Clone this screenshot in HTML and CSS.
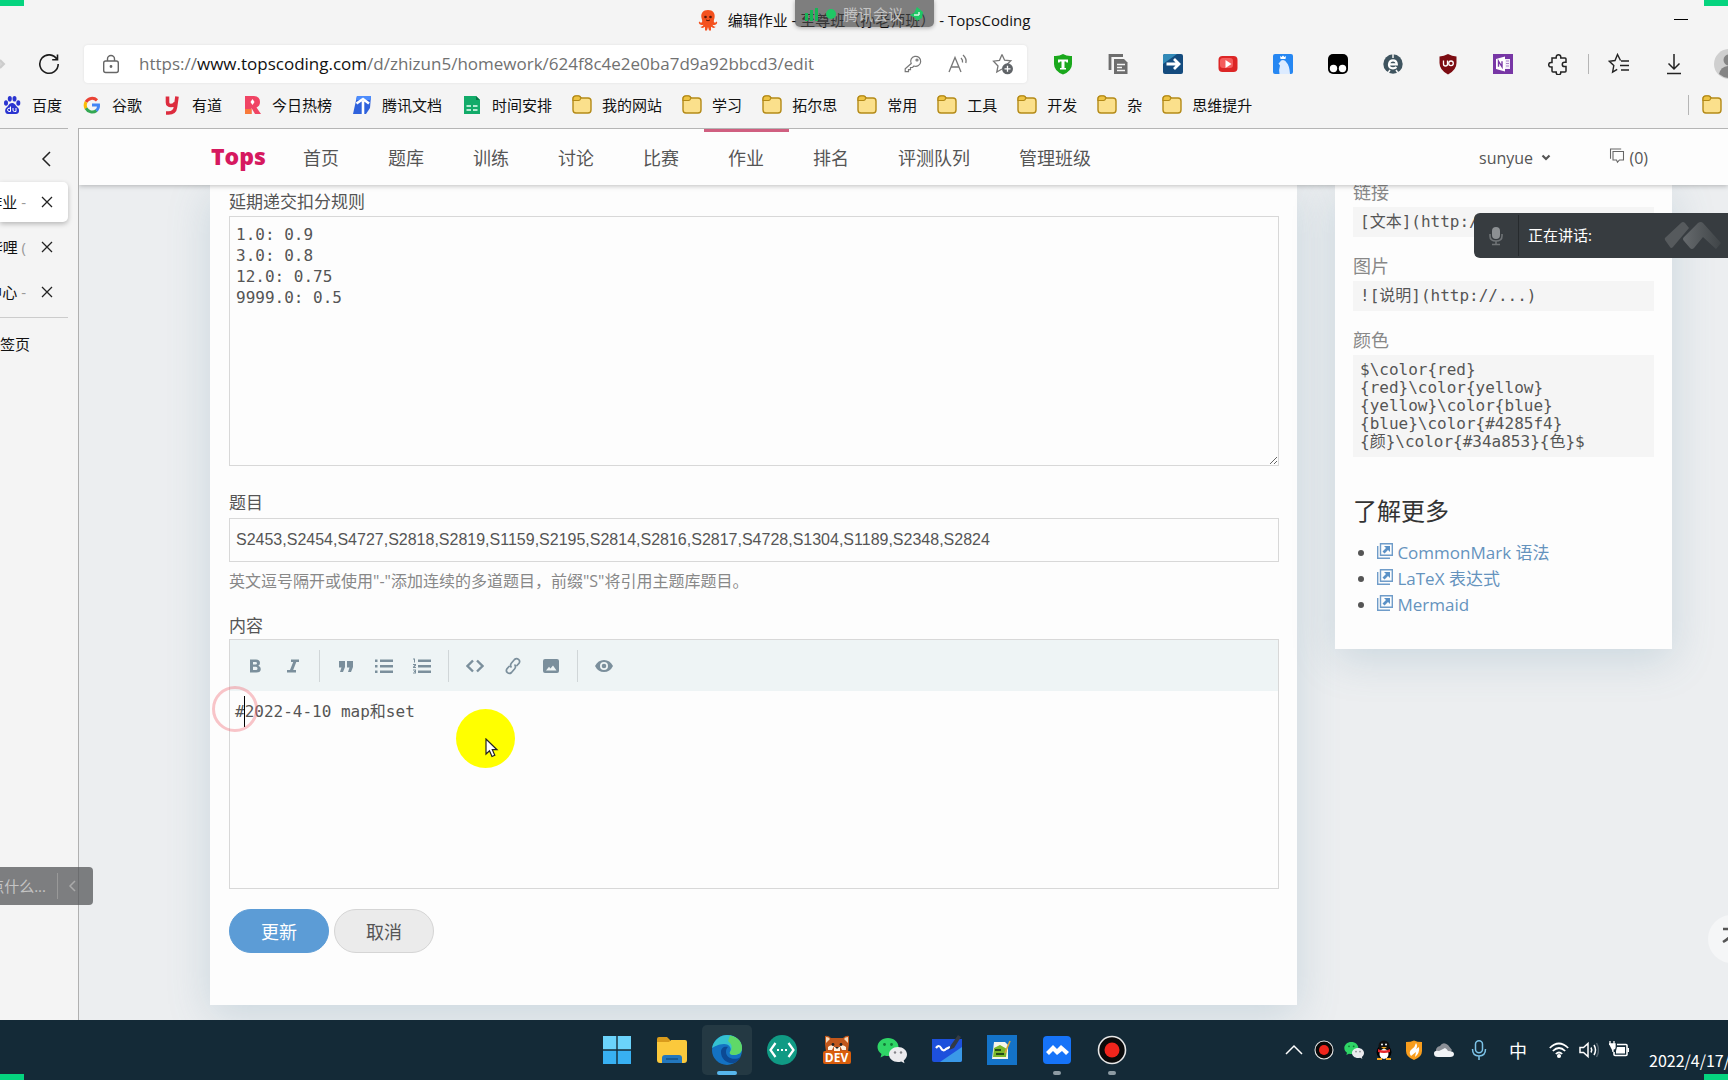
FILE: index.html
```html
<!doctype html>
<html lang="zh-CN">
  <head>
    <title>编辑作业 - TopsCoding</title>
    <meta charset="UTF-8" />
    <meta name="viewport" content="width=device-width, initial-scale=1" />
    <link rel="stylesheet" href="styles.css">
  </head>

  <body>
    <svg class="defs" width="0" height="0">
      <symbol id="folder" viewBox="0 0 20 20">
        <path d="M1 4q0-3 3-3h2.500q1.500 0 2.300 1.500l.7.500H16q3 0 3 3v9q0 3-3 3H4q-3 0-3-3z" fill="#fbe08c" stroke="#b48a17" stroke-width="1.400" />
        <path d="M1 4q0-3 3-3h2.500q1.500 0 2.300 2Q8.300 5.500 6.500 5.500H1z" fill="#eec443" stroke="#b48a17" stroke-width="1.200" />
      </symbol>
      <symbol id="close" viewBox="0 0 12 12">
        <path d="M1 1l10 10M11 1L1 11" stroke="#222" stroke-width="1.300" />
      </symbol>
      <symbol id="wechat" viewBox="0 0 30 30">
        <path d="M11 3C5 3 .5 7 .5 12c0 3 1.500 5.300 4 7l-1 3.500L7.500 20.500q2 .6 4 .5C17 21 21.500 17 21.500 12S17 3 11 3z" fill="#2fd566" />
        <path d="M21 12c-5 0-9 3.400-9 7.500s4 7.500 9 7.500q1.700 0 3.200-.5l3.300 1.800-.8-2.900c2-1.400 3.300-3.500 3.300-5.900 0-4.100-4-7.500-9-7.500z" fill="#ebebee" />
        <g fill="#137a37"><circle cx="7.500" cy="9.500" r="1.400" /><circle cx="14.500" cy="9.500" r="1.400" /></g>
        <g fill="#85858a"><circle cx="18" cy="17.500" r="1.200" /><circle cx="24" cy="17.500" r="1.200" /></g>
      </symbol>
      <symbol id="external" viewBox="0 0 16 16">
        <path d="M3.500.7h11.800v11.600H3.500zM.7 3v12.300H13" fill="none" stroke="#6f9cc9" stroke-width="1.400" />
        <path d="M7 3h6v6l-2-2-3.500 3.500L5.500 8.500 9 5z" fill="#5b91c6" />
      </symbol>
      <symbol id="record" viewBox="0 0 30 30">
        <circle cx="15" cy="15" r="13.500" fill="#0a0a0a" stroke="#e6e6e6" stroke-width="1.600" />
        <circle cx="15" cy="15" r="7.500" fill="#f0251c" />
      </symbol>
    </svg>

    <header class="browser">
      <div class="titlebar">
        <svg class="favicon" width="20" height="22" viewBox="0 0 20 22">
          <path d="M10 1C5 1 2.500 4.500 3.500 9c.5 2 1 3 .5 4-.7 1.200-2 .5-2.500-.5-.8 0-1 1.500 0 2.500s3 1.200 4 .8c-.5 1.500-2 2-3 2 .3 1.500 3 1.500 4.500 0L7 21.500h2L10 18l1 3.500h2L13 17.800c1.500 1.500 4.200 1.500 4.500 0-1 0-2.500-.5-3-2 1 .4 3 .2 4-.8s.8-2.500 0-2.500c-.5 1-1.800 1.700-2.500.5-.5-1 0-2 .5-4C17.500 4.500 15 1 10 1z" fill="#f4511e" />
          <circle cx="7.500" cy="8" r="1.300" fill="#55180a" /><circle cx="12.500" cy="8" r="1.300" fill="#55180a" />
          <path d="M8 11q2 1.500 4 0" fill="none" stroke="#55180a" />
        </svg>
        <span class="page-title">编辑作业 - 至尊班（孙老师班） - TopsCoding</span>
        <button class="minimize" aria-label="最小化"></button>
        <div class="meeting-bar">
          <svg width="14" height="14" viewBox="0 0 14 14" fill="#18b455"><path d="M0 6h3v8H0zM5 3h3v11H5zM10 1h3v13h-3z" /></svg>
          <span class="dot"></span>
          <span>腾讯会议</span>
          <svg width="14" height="14" viewBox="0 0 14 14"><path d="M7 0l6 5-1 6-5 3-2-3-5-3 4-2z" fill="#1fc765" /><path d="M4 8h5M9 5v3" stroke="#d9f5e3" stroke-width="1.500" /></svg>
        </div>
      </div>

      <div class="toolbar">
        <button class="back" aria-label="前进">
          <svg width="6" height="14" viewBox="0 0 6 14"><path d="M0 3l4 4-4 4" fill="#d5d5d5" stroke="#ccc" stroke-width="2" /></svg>
        </button>
        <button class="reload" aria-label="刷新">
          <svg width="22" height="22" viewBox="0 0 22 22" fill="none" stroke="#1b1b1b" stroke-width="1.600"><path d="M19 6.500A9.200 9.200 0 1 0 20.200 11M19.500 1.500v5.300h-5.300" /></svg>
        </button>
        <div class="address">
          <svg width="20" height="20" viewBox="0 0 20 20" fill="none" stroke="#666" stroke-width="1.400"><rect x="2.700" y="7" width="14.600" height="11.500" rx="2" /><path d="M6.500 7V5a3.500 3.500 0 0 1 7 0v2" /><circle cx="10" cy="12.500" r=".7" fill="#666" /></svg>
          <div class="url">https://<b>www.topscoding.com</b>/d/zhizun5/homework/624f8c4e2e0ba7d9a92bbcd3/edit</div>
          <button aria-label="密码"><svg width="18" height="18" viewBox="0 0 18 18" fill="none" stroke="#777" stroke-width="1.200"><path d="M7.200 8.500A5 5 0 1 1 10 11l-1.500 1.500H6.500v2.200H4.500v2H1.200v-3z" /><circle cx="13" cy="5" r="1" /></svg></button>
          <button aria-label="朗读"><svg width="20" height="20" viewBox="0 0 20 20" fill="none" stroke="#777" stroke-width="1.300"><path d="M1 18L7 3.500 13 18M3.200 13h7.600M13 4q2 2 1.500 4.500M15 1q4 3.500 2.800 8" /></svg></button>
          <button aria-label="收藏"><svg width="22" height="22" viewBox="0 0 22 22" fill="none" stroke="#777" stroke-width="1.300"><path d="M10 1.500l2.600 5.700 6.200.6-3.500 3.300M10 16l-5.200 3 1.200-6-4.500-4.800 6-.9L10 1.500" /><circle cx="15.500" cy="15.800" r="5.500" fill="#606468" stroke="none" /><path d="M15.500 12.800v6M12.500 15.800h6" stroke="#fff" /></svg></button>
        </div>
        <div class="extensions">
          <button aria-label="T"><svg width="20" height="22" viewBox="0 0 20 22"><path d="M10 1q4 2.500 9 2v8q0 7-9 10.500Q1 18 1 11V3q5 .5 9-2z" fill="#1aa81c" /><path d="M5 6.500h10v3h-1.500L13 8.500h-1.500V15H13v1.500H7V15h1.500V8.500H7L6.500 9.500H5z" fill="#fff" /></svg></button>
          <button aria-label="复制"><svg width="20" height="22" viewBox="0 0 20 22"><path d="M2 17V2.500h13" fill="none" stroke="#6d6d6d" stroke-width="2.800" /><path d="M6 6h10l3.500 3.500V21H6z" fill="#6d6d6d" /><path d="M9 11.500h8M9 14.500h5M9 17.500h8" stroke="#f4f4f4" stroke-width="1.500" /></svg></button>
          <button aria-label="跳转"><svg width="20" height="20" viewBox="0 0 20 20"><rect width="20" height="20" rx="2" fill="#144b7e" /><path d="M0 10V2q0-2 2-2h12z" fill="#328ab8" /><path d="M3.500 10h12M11 5l5 5-5 5" fill="none" stroke="#fff" stroke-width="2.800" /></svg></button>
          <button aria-label="视频"><svg width="20" height="18" viewBox="0 0 20 18"><rect x=".5" y="1" width="19" height="16" rx="4" fill="#dc2626" /><rect x="2" y="3" width="13" height="10" rx="3" fill="#f45c5c" /><path d="M7.500 5l6 4-6 4z" fill="#fff" /></svg></button>
          <button aria-label="企鹅"><svg width="20" height="20" viewBox="0 0 20 20"><rect width="20" height="20" rx="2" fill="#2687f2" /><path d="M7 2l1.500 1L10 1.500l1.500 1.500L13 2l-.5 3h-5z" fill="#fff" /><path d="M5.500 9.500L7 8q.5-2 3-2t3.500 2.500q3 3 3.500 11.500H6.500q-1-4 .5-8.500z" fill="#dcebff" /></svg></button>
          <button aria-label="脚本"><svg width="20" height="20" viewBox="0 0 20 20"><rect width="20" height="20" rx="5" fill="#000" /><circle cx="5.500" cy="14.500" r="3.700" fill="#fff" /><circle cx="14.500" cy="14.500" r="3.700" fill="#fff" /></svg></button>
          <button aria-label="E"><svg width="20" height="20" viewBox="0 0 20 20"><circle cx="10" cy="10" r="9.700" fill="#3f545f" /><path d="M10 0v4M5 19l2-3M15 19l-2-3" stroke="#f4f4f4" stroke-width="1.500" /><path d="M6 10.300h7.800Q13.500 6.300 10 6.300T6 10.300t4 4q2 0 3.500-1.300" fill="none" stroke="#fff" stroke-width="2.200" /></svg></button>
          <button aria-label="uBlock"><svg width="20" height="22" viewBox="0 0 20 22"><path d="M10 1q4 2.300 8.500 2.500V10q0 7-8.500 11.500Q1.500 17 1.500 10V3.500Q6 3.300 10 1z" fill="#7c0c12" /><path d="M5.500 7.500v3.500q0 2 2 2t2-2V7.500v5" fill="none" stroke="#fff" stroke-width="1.300" /><circle cx="13" cy="10.300" r="2.300" fill="none" stroke="#fff" stroke-width="1.300" /></svg></button>
          <button aria-label="OneNote"><svg width="20" height="20" viewBox="0 0 20 20"><rect width="20" height="20" fill="#7736a5" /><path d="M3 5l9-2.500v15L3 15z" fill="#fff" /><path d="M12 5h5v10h-5" fill="#f4effa" /><path d="M5.500 12.800V7.200l3.500 5.600V7.200" fill="none" stroke="#7736a5" stroke-width="1.400" /><path d="M13 7h3M13 9.500h3M13 12h3" stroke="#a983c8" /></svg></button>
          <button aria-label="扩展"><svg width="20" height="22" viewBox="0 0 20 22"><path d="M4 5h4.200V4a2.300 2.300 0 0 1 4.600 0v1H17q1 0 1 1v3.200h-1.500a2.200 2.200 0 0 0 0 4.400H18V18q0 1-1 1h-4.200v.5a2.300 2.300 0 0 1-4.600 0V19H5q-1 0-1-1v-4H3a2.300 2.300 0 0 1 0-4.600h1z" fill="none" stroke="#222" stroke-width="1.500" /></svg></button>
          <span class="divider"></span>
          <button aria-label="收藏夹"><svg width="22" height="22" viewBox="0 0 22 22" fill="none" stroke="#222" stroke-width="1.400"><path d="M12.500 7.500L9.500 1.500 7 7.500l-5.700.8 4.500 4.300-1.200 6.600 4.600-2.800M13 8h8M12 12.500h9M13 17h8" /></svg></button>
          <button aria-label="下载"><svg width="18" height="22" viewBox="0 0 18 22" fill="none" stroke="#222" stroke-width="1.500"><path d="M9 1v15M3.500 10.500L9 16l5.500-5.500M2 20.500h14" /></svg></button>
          <button class="avatar" aria-label="用户"><svg width="30" height="30" viewBox="0 0 30 30"><circle cx="15" cy="15" r="15" fill="#cfcfcf" /><circle cx="15" cy="11" r="5.500" fill="#858585" /><path d="M5 25q2-8 10-8t10 8q-10 8-20 0z" fill="#858585" /></svg></button>
        </div>
      </div>

      <nav class="bookmarks">
        <a href="#"><svg viewBox="0 0 20 20" fill="#2a34d0"><ellipse cx="4" cy="8" rx="2" ry="2.800" /><ellipse cx="7.800" cy="3.800" rx="2" ry="2.800" /><ellipse cx="12.500" cy="3.800" rx="2" ry="2.800" /><ellipse cx="16.300" cy="8" rx="2" ry="2.800" /><path d="M10 8c-3 0-3.500 3-5.500 4.500s-2 6.500 1.500 6.500h8c3.500 0 4-4.500 1.700-6.500S13 8 10 8z" /><path d="M8.500 11.500v5H7q-1.500-.3-1.500-1.700T7 13.200h1.500M11 13v2q0 1.500 1.300 1.500H14V13" fill="none" stroke="#fff" /></svg>百度</a>
        <a href="#"><svg viewBox="0 0 20 20" fill="none" stroke-width="3"><path d="M15 5.300A7 7 0 0 0 4 7" stroke="#ea4335" /><path d="M4 7a7 7 0 0 0 0 6.500" stroke="#fbbc05" /><path d="M4 13.300a7 7 0 0 0 10.500 2.200" stroke="#34a853" /><path d="M14.300 15.700Q16.800 13.500 16.500 10H10" stroke="#4285f4" /></svg>谷歌</a>
        <a href="#"><svg viewBox="0 0 20 20" fill="none" stroke="#dd2c3e" stroke-width="3.600"><path d="M5.500 1.500v6q0 3 3.500 3t4.500-3M15 1.500L13.500 12q-.7 6-7 6H4" /></svg>有道</a>
        <a href="#"><svg viewBox="0 0 20 20"><path d="M3 1h9q6 .5 6 6 0 4-3.500 5.500L19 19h-6l-3.500-6v6H3z" fill="#f04464" /><path d="M3 14h6.500v5H3z" fill="#f87a3a" /><path d="M10.500 4l2 3-2 3-2-3z" fill="#fff" /></svg>今日热榜</a>
        <a href="#"><svg viewBox="0 0 20 20"><path d="M5 1h14l-1 12-4 6H1z" fill="#2f62dc" /><path d="M5 1h14l-.3 4H4z" fill="#4e8dfc" /><path d="M4.500 8.500L11 4l6 4.500M11 6v13" fill="none" stroke="#fff" stroke-width="2.600" /></svg>腾讯文档</a>
        <a href="#"><svg viewBox="0 0 20 20"><path d="M2 1h12l4 4v14H2z" fill="#12ab69" /><path d="M14 1l4 4h-4z" fill="#087748" /><path d="M4.500 11h4.500M11 11h4.500M4.500 15h4.500M11 15h4.500" stroke="#eafff4" stroke-width="1.600" /></svg>时间安排</a>
        <a href="#"><svg><use href="#folder" /></svg>我的网站</a>
        <a href="#"><svg><use href="#folder" /></svg>学习</a>
        <a href="#"><svg><use href="#folder" /></svg>拓尔思</a>
        <a href="#"><svg><use href="#folder" /></svg>常用</a>
        <a href="#"><svg><use href="#folder" /></svg>工具</a>
        <a href="#"><svg><use href="#folder" /></svg>开发</a>
        <a href="#"><svg><use href="#folder" /></svg>杂</a>
        <a href="#"><svg><use href="#folder" /></svg>思维提升</a>
        <a href="#" class="other" aria-label="其他收藏夹"><svg><use href="#folder" /></svg></a>
      </nav>
    </header>

    <div class="workspace">
      <aside class="tabs">
        <button class="collapse" aria-label="折叠">
          <svg width="10" height="16" viewBox="0 0 10 16"><path d="M9 1L2 8l7 7" fill="none" stroke="#222" stroke-width="1.500" /></svg>
        </button>
        <div class="tab active"><span>作业 <i>-</i></span><button aria-label="关闭"><svg width="12" height="12"><use href="#close" /></svg></button></div>
        <div class="tab"><span>哔哩 <i>(</i></span><button aria-label="关闭"><svg width="12" height="12"><use href="#close" /></svg></button></div>
        <div class="tab"><span>中心 <i>-</i></span><button aria-label="关闭"><svg width="12" height="12"><use href="#close" /></svg></button></div>
        <button class="new-tab">签页</button>
      </aside>

      <main class="page">
        <nav class="site-nav">
          <a class="logo" href="#">Tops</a>
          <a href="#">首页</a>
          <a href="#">题库</a>
          <a href="#">训练</a>
          <a href="#">讨论</a>
          <a href="#">比赛</a>
          <a href="#" class="current">作业</a>
          <a href="#">排名</a>
          <a href="#">评测队列</a>
          <a href="#">管理班级</a>
          <div class="account">
            <a href="#">sunyue <svg width="10" height="10" viewBox="0 0 10 10"><path d="M1.500 1.500L5 5l3.500-3.500" fill="none" stroke="#555" stroke-width="2.200" /></svg></a>
            <a href="#"><svg width="16" height="16" viewBox="0 0 16 18"><path d="M.7 12V1.200h12M3.500 4h11.800v9.500h-4.500L8.500 16l-1-2.500h-4z" fill="none" stroke="#666" stroke-width="1.200" /></svg> (0)</a>
          </div>
        </nav>

        <div class="columns">
          <form class="card" id="homework">
            <label for="rules">延期递交扣分规则</label>
            <textarea id="rules" name="rules" spellcheck="false">1.0: 0.9
3.0: 0.8
12.0: 0.75
9999.0: 0.5</textarea>

            <label for="problems">题目</label>
            <input type="text" id="problems" name="problems" value="S2453,S2454,S4727,S2818,S2819,S1159,S2195,S2814,S2816,S2817,S4728,S1304,S1189,S2348,S2824" />
            <p class="help">英文逗号隔开或使用"-"添加连续的多道题目，前缀"S"将引用主题库题目。</p>

            <label for="content">内容</label>
            <div class="editor">
              <div class="editor-tools">
                <button type="button" aria-label="粗体"><svg viewBox="0 0 18 18"><path d="M4 2.500h6q4 .2 4 3.500 0 2-1.700 2.800Q14.800 9.500 14.800 12q0 3.500-4.500 3.500H4zm3 2.500v2.500h2.500q1.500-.1 1.500-1.300T9.500 5zm0 4.800V13h3q1.500-.1 1.500-1.600t-1.500-1.600z" fill-rule="evenodd" /></svg></button>
                <button type="button" aria-label="斜体"><svg viewBox="0 0 18 18"><path d="M7 2.500h8V5h-2.700L9.200 13H12v2.500H3V13h3l3.200-8H7z" /></svg></button>
                <span></span>
                <button type="button" aria-label="引用"><svg viewBox="0 0 18 18"><path d="M2 4h6v6l-2 5H3l1.500-4.500H2zM10 4h6v6l-2 5h-3l1.500-4.500H10z" /></svg></button>
                <button type="button" aria-label="列表"><svg viewBox="0 0 18 18"><path d="M0 2.500h2.500V5H0zM0 8h2.500v2.500H0zM0 13.500h2.500V16H0zM5 2.500h13V5H5zM5 8h13v2.500H5zM5 13.500h13V16H5z" /></svg></button>
                <button type="button" aria-label="编号"><svg viewBox="0 0 18 18"><path d="M5 2.500h13V5H5zM5 8h13v2.500H5zM5 13.500h13V16H5zM0 1.500h2v4H1V2.500H0zM0 7h3v1.500L1.500 10H3v1H0v-1l1.500-2H0zM0 12.500h3v4H0v-1h2V15H1v-1h1v-.5H0z" /></svg></button>
                <span></span>
                <button type="button" aria-label="代码"><svg viewBox="0 0 18 18"><path d="M7 3.500L1.500 9 7 14.500M11 3.500L16.500 9 11 14.500" fill="none" stroke="#7b8f9c" stroke-width="2.400" /></svg></button>
                <button type="button" aria-label="链接"><svg viewBox="0 0 18 18"><path d="M7.500 10.500q-2-2 0-4.500l3-3.500q2-1.800 4-.2t.5 4L12.500 9M10.500 7.500q2 2 0 4.500l-3 3.500q-2 1.800-4 .2t-.5-4L5.500 9" fill="none" stroke="#7b8f9c" stroke-width="1.700" /></svg></button>
                <button type="button" aria-label="图片"><svg viewBox="0 0 18 18"><path d="M3 2h12q2 0 2 2v10q0 2-2 2H3q-2 0-2-2V4q0-2 2-2zm1 11.500h10.500L11 8.500l-2.500 3L7 9.800z" fill-rule="evenodd" /></svg></button>
                <span></span>
                <button type="button" aria-label="预览"><svg viewBox="0 0 18 18"><path d="M9 3Q3 3 0 9q3 6 9 6t9-6q-3-6-9-6zm0 2a4 4 0 1 1 0 8 4 4 0 0 1 0-8zm0 1.700a2.300 2.300 0 1 0 0 4.600 2.300 2.300 0 0 0 0-4.600z" fill-rule="evenodd" /></svg></button>
              </div>
              <textarea id="content" name="content" spellcheck="false">#2022-4-10 map和set</textarea>
              <div class="caret"></div>
              <div class="click-ring"></div>
              <div class="pointer">
                <svg width="14" height="20" viewBox="0 0 14 20"><path d="M1 1v15l3.500-3.300 2.500 5.800 2.800-1.200L7.300 11.700H12z" fill="#fff" stroke="#222" stroke-width="1.200" /></svg>
              </div>
            </div>

            <div class="actions">
              <button type="submit" class="primary">更新</button>
              <button type="button">取消</button>
            </div>
          </form>

          <aside class="card hints">
            <h4>链接</h4>
            <pre>[文本](http://...)</pre>
            <h4>图片</h4>
            <pre>![说明](http://...)</pre>
            <h4>颜色</h4>
            <pre>$\color{red}
{red}\color{yellow}
{yellow}\color{blue}
{blue}\color{#4285f4}
{颜}\color{#34a853}{色}$</pre>
            <h2>了解更多</h2>
            <ul>
              <li><a href="#"><svg width="16" height="16"><use href="#external" /></svg> CommonMark 语法</a></li>
              <li><a href="#"><svg width="16" height="16"><use href="#external" /></svg> LaTeX 表达式</a></li>
              <li><a href="#"><svg width="16" height="16"><use href="#external" /></svg> Mermaid</a></li>
            </ul>
          </aside>
        </div>
      </main>

      <div class="speaking">
        <svg width="16" height="20" viewBox="0 0 16 20"><rect x="4" y="1" width="8" height="12" rx="4" fill="#8c9093" /><path d="M2 8v2q0 5 6 5t6-5V8M8 15v3.500M4 18.500h8" fill="none" stroke="#6f7376" stroke-width="1.600" /></svg>
        <span>正在讲话:</span>
        <svg class="brand" width="58" height="32" viewBox="0 0 58 32">
          <defs>
            <linearGradient id="fade" x1="0" y1="0" x2="1" y2="0"><stop offset="0" stop-color="#666a6d" /><stop offset="1" stop-color="#3f4447" /></linearGradient>
          </defs>
          <path d="M2 17L17 3q2-2 4 0l4 5L9 27q-2 2-3 0l-5-7q-1-2 1-3z" fill="#565a5d" />
          <path d="M20 17L34 3q3-2 5 0l18 20-5 6-13-12-9 11q-2 2-4 0l-6-7q-2-2 0-4z" fill="url(#fade)" />
        </svg>
      </div>
      <div class="say">
        <span>点什么...</span>
        <svg width="8" height="12" viewBox="0 0 8 12"><path d="M7 1L2 6l5 5" fill="none" stroke="#aaa" stroke-width="1.500" /></svg>
      </div>
      <button class="translate" aria-label="翻译">
        <svg width="48" height="48" viewBox="0 0 48 48"><path d="M15 14h13M26 14q-1 7-11 13M21 24q2 3 5 4" fill="none" stroke="#555" stroke-width="2.600" /></svg>
      </button>
    </div>

    <footer class="taskbar">
      <div class="apps">
        <button aria-label="开始"><svg viewBox="0 0 30 30" fill="#4cc2f8"><path d="M1 1h13.300v13.300H1zM15.700 1H29v13.300H15.700z" fill="#6bd3fb" /><path d="M1 15.700h13.300V29H1zM15.700 15.700H29V29H15.700z" fill="#38b0f2" /></svg></button>
        <button aria-label="资源管理器"><svg viewBox="0 0 30 30"><path d="M0 4q0-2 2-2h8l3 3v4H0z" fill="#d99b1c" /><path d="M0 7h12l2-2h14q2 0 2 2v18q0 3-3 3H3q-3 0-3-3z" fill="#fbc93c" /><path d="M5 28v-5q0-3 3-3h14q3 0 3 3v5z" fill="#2377bd" /><path d="M9 24h12" stroke="#155a95" stroke-width="2" /></svg></button>
        <button class="open" aria-label="Edge"><svg viewBox="0 0 30 30"><circle cx="15" cy="15" r="15" fill="#1472c2" /><path d="M0 13C2 4 9 0 15 0c9 0 15 6 15 13 0 5-4 7-8 7-3 0-5-1-4-3 2-3 0-8-6-8-6 0-10 3-12 4z" fill="#35c1d0" /><path d="M18 .5C26 2 30 7 30 13c0 5-4 7-8 7-3 0-5-1-4-3 3-4 2-8-2-11z" fill="#5fd868" /><path d="M9 17c0 7 6 12 13 11 3-1 5-3 7-6-7 4-15 1-15-5 0-3 1-4 2-5-4-1-7 1-7 5z" fill="#0c4a94" /></svg></button>
        <button aria-label="代码"><svg viewBox="0 0 30 30"><circle cx="15" cy="15" r="15" fill="#109a84" /><path d="M8.500 8L3.500 15l5 7M21.500 8l5 7-5 7" fill="none" stroke="#fff" stroke-width="2.200" /><path d="M10 15h2M14 15h2M18 15h2" stroke="#fff" stroke-width="2" /></svg></button>
        <button class="dev" aria-label="Dev-C++"><svg viewBox="0 0 30 30"><path d="M3 1q3-1 6 2h12q3-3 6-2v8l-1 8H4L3 9z" fill="#c1571b" /><path d="M4 2q3 0 4 2L4 8zM26 2q-3 0-4 2l4 4z" fill="#f9d9b7" /><path d="M6 12q3-3 6-1l-2 4H6zM24 12q-3-3-6-1l2 4h4zM12 12h6v4h-6z" fill="#fff0df" /><path d="M13 12h4l-2 2z" fill="#222" /><circle cx="11" cy="9.500" r="1.400" fill="#222" /><circle cx="19" cy="9.500" r="1.400" fill="#222" /><rect x="1" y="16" width="28" height="13" rx="2" fill="#d85d0c" /></svg><b>DEV</b></button>
        <button aria-label="微信"><svg><use href="#wechat" /></svg></button>
        <button aria-label="白板"><svg viewBox="0 0 30 30"><path d="M0 4h30v21q0 2-2 2H2q-2 0-2-2z" fill="#1d50dc" /><path d="M30 12v13q0 2-2 2H8z" fill="#3a99e8" /><path d="M4 13q3-4 5 0t5 1l4-2" fill="none" stroke="#fff" stroke-width="2.200" /><path d="M17 15l2-5 7-10 3 2-7 11z" fill="#333a44" /></svg></button>
        <button aria-label="记事本"><svg viewBox="0 0 30 30"><rect width="30" height="30" fill="#1473c8" /><path d="M7 7h11l3 3v14H5z" fill="#f5f5ea" /><path d="M7 13l6-3 7 4-1 8H6z" fill="#7ab82b" /><path d="M8 15h6M9 19h8" stroke="#234a1a" stroke-width="2" /><path d="M18 18l5-12" stroke="#d8a43a" stroke-width="1.600" /></svg></button>
        <button class="running" aria-label="腾讯会议"><svg viewBox="0 0 30 30"><rect x="1" y="1" width="28" height="28" rx="4" fill="#1673f8" /><path d="M4 17l7-7 4 4 4-4 8 7-3 3-4-4-5 4-4-4-4 4z" fill="#fff" /></svg></button>
        <button class="running" aria-label="录屏"><svg><use href="#record" /></svg></button>
      </div>
      <div class="tray">
        <svg viewBox="0 0 20 20" fill="none" stroke="#fff" stroke-width="1.500"><path d="M2 14l8-8 8 8" /></svg>
        <svg><use href="#record" /></svg>
        <svg><use href="#wechat" /></svg>
        <svg viewBox="0 0 20 20"><ellipse cx="10" cy="12" rx="7.500" ry="7" fill="#000" /><circle cx="10" cy="6" r="5.500" fill="#111" /><ellipse cx="10" cy="14" rx="4.500" ry="5" fill="#fff" /><path d="M4 9q6 3 12 0v3q-6 2-12 0z" fill="#e5252a" /><path d="M7 7h6l-3 2z" fill="#f5a61c" /><circle cx="8" cy="4.500" r="1" fill="#fff" /><circle cx="12" cy="4.500" r="1" fill="#fff" /><path d="M3 19h5M12 19h5" stroke="#f5a61c" stroke-width="2" /></svg>
        <svg viewBox="0 0 20 20"><path d="M2 2q5 0 8-1.500Q13 2 18 2v9q0 6-8 9-8-3-8-9z" fill="#f89d1d" /><path d="M7 16q-3-4 1-7 3-2 4-6 2 3 0 6l3-2q1 6-4 10l1-5z" fill="#fff" /></svg>
        <svg viewBox="0 0 20 20"><path d="M2 13q-1-6 4-7 3-5 8-1l4 5-4 5z" fill="#8d9198" /><path d="M4 17q-4 0-4-3.500T5 11l6-3q2 1 3 3 6 0 6 3t-4 3z" fill="#f1f3f6" /></svg>
        <svg class="wide" viewBox="0 0 20 20" fill="none" stroke="#7cc3e8" stroke-width="1.500"><rect x="6.500" y=".8" width="7" height="12" rx="3.500" /><path d="M3.500 9q0 7 6.500 7t6.500-7M10 16v4" /></svg>
        <span class="ime">中</span>
        <svg class="wide" viewBox="0 0 20 20" fill="none" stroke="#fff" stroke-width="1.700"><path d="M.8 8q9-9 18.400 0M3.800 11q6.200-6 12.400 0M6.800 14q3.200-3 6.400 0" /><circle cx="10" cy="16" r="1.200" fill="#fff" /></svg>
        <svg viewBox="0 0 20 20" fill="none" stroke="#fff" stroke-width="1.500"><path d="M1 7.500h3.500L9 3.500v13l-4.500-4H1zM12 7.500q1.500 2.500 0 5M15 5q3 5 0 10" /><path d="M17.500 3q4 7 0 14" stroke="#53636e" /></svg>
        <svg viewBox="0 0 20 20"><path d="M1 1v4M5 1v4M0 4h6v3q0 2-2 2v3" fill="#fff" stroke="#fff" stroke-width="1.300" /><path d="M8 4.500h9q1 0 1 1v9q0 1-1 1H6q-1 0-1-1V12" fill="none" stroke="#fff" stroke-width="1.600" /><path d="M8 7h8v6.500H7V11zM18.500 8H20v4h-1.500z" fill="#fff" /></svg>
        <time>2022/4/17/星期日</time>
      </div>
    </footer>

    <i class="corner top left"></i>
    <i class="corner top right"></i>
    <i class="corner bottom left"></i>
    <i class="corner bottom right"></i>
  </body>
</html>
```

FILE: styles.css
```css
* {
  box-sizing: border-box;
}

body {
  display: flex;
  flex-direction: column;
  height: 100vh;
  margin: 0;
  overflow: hidden;
  background: #f4f4f4;
  color: #111;
  font-family: 'Open Sans', 'Noto Sans CJK SC', sans-serif;
  font-size: 15px;
}

a {
  color: inherit;
  text-decoration: none;
}

button {
  padding: 0;
  border: 0;
  background: none;
  color: inherit;
  font: inherit;
}

svg {
  flex: none;
}

.defs {
  position: absolute;
}

/* browser chrome */

.browser {
  flex: none;
}

.titlebar {
  position: relative;
  display: flex;
  justify-content: center;
  align-items: center;
  gap: 10px;
  height: 40px;
  line-height: 20px;
}

.page-title {
  white-space: pre;
}

.minimize {
  position: absolute;
  right: 40px;
  top: 10px;
  width: 14px;
  height: 10px;
  border-bottom: 1px solid #000;
}

.meeting-bar {
  position: absolute;
  left: 46%;
  top: 0;
  display: flex;
  align-items: center;
  gap: 7px;
  height: 27px;
  padding: 0 10px;
  border-radius: 0 0 5px 5px;
  background: rgba(70, 70, 70, 0.68);
  box-shadow: 0 1px 4px rgba(0, 0, 0, 0.3);
  color: #c4c4c4;
}

.dot {
  width: 10px;
  height: 10px;
  border-radius: 50%;
  background: #1fc765;
}

.toolbar {
  display: flex;
  align-items: center;
  height: 48px;
}

.toolbar button {
  display: flex;
  justify-content: center;
  align-items: center;
}

.back {
  width: 6px;
}

.reload {
  width: 78px;
  padding-left: 8px;
}

.address {
  display: flex;
  flex: 1;
  align-items: center;
  height: 38px;
  padding: 0 2px 0 17px;
  border-radius: 4px;
  background: #fff;
  box-shadow: 0 0 3px rgba(0, 0, 0, 0.08);
}

.address button {
  width: 45px;
}

.url {
  flex: 1;
  margin-left: 18px;
  overflow: hidden;
  color: #717171;
  font-size: 17px;
  line-height: 22px;
  white-space: nowrap;
}

.url b {
  color: #111;
  font-weight: 400;
}

.extensions {
  display: flex;
  align-items: center;
  margin-left: 8px;
  margin-right: -28px;
}

.extensions button {
  width: 55px;
}

.divider {
  width: 1px;
  height: 20px;
  margin: 0 2px 0 3px;
  background: #b5b5b5;
}

.bookmarks {
  display: flex;
  gap: 20px;
  height: 40px;
  padding: 7px 6px 13px 2px;
  line-height: 20px;
  white-space: nowrap;
}

.bookmarks a {
  display: flex;
  gap: 10px;
}

.bookmarks svg {
  width: 20px;
  height: 20px;
}

.other {
  margin-left: auto;
  padding-left: 13px;
  border-left: 1px solid #b5b5b5;
}

/* vertical tabs */

.workspace {
  position: relative;
  display: flex;
  flex: 1;
  min-height: 0;
  overflow: hidden;
}

.tabs {
  width: 79px;
  flex: none;
  padding-right: 10px;
  border-right: 1px solid #b0b0b0;
}

.collapse {
  display: block;
  width: 100%;
  height: 54px;
  padding: 10px 0 0 24px;
  border-top: 1px solid #b5b5b5;
}

.tab {
  display: flex;
  justify-content: flex-end;
  align-items: center;
  gap: 15px;
  height: 40px;
  margin-bottom: 5px;
  padding-right: 15px;
  line-height: 20px;
  white-space: nowrap;
}

.tab button {
  display: flex;
}

.tab i {
  color: #999;
  font-style: normal;
}

.active {
  border-radius: 0 5px 5px 0;
  background: #fff;
  box-shadow: 0 2px 5px rgba(0, 0, 0, 0.25);
}

.new-tab {
  display: block;
  width: 100%;
  height: 52px;
  border-top: 1px solid #ccc;
  text-align: left;
}

/* site */

.page {
  flex: 1;
  min-width: 0;
  overflow: hidden;
  border-top: 1px solid #b5b5b5;
  background: #eceef0;
  color: #555;
  font-size: 17px;
}

.site-nav {
  position: relative;
  z-index: 1;
  display: flex;
  height: 56px;
  padding: 0 80px 0 132px;
  background: #fdfdfd;
  box-shadow: 0 1px 5px rgba(0, 0, 0, 0.25);
  line-height: 58px;
  white-space: nowrap;
}

.site-nav > a {
  padding: 0 25px 0 24px;
  font-size: 18px;
}

.site-nav > .logo {
  width: 68px;
  padding: 0;
  color: #d6195f;
  font-size: 23px;
  font-weight: 800;
  line-height: 54px;
}

.site-nav > .current {
  border-top: 3px solid #d05f80;
  line-height: 52px;
}

.account {
  display: flex;
  gap: 54px;
  margin-left: auto;
  font-size: 16px;
}

.account svg {
  margin-left: 4px;
}

.columns {
  display: flex;
  align-items: flex-start;
  gap: 38px;
  padding: 0 56px 0 131px;
}

.card {
  background: #fdfdfd;
  box-shadow: 0 10px 40px rgba(80, 130, 160, 0.22);
}

form.card {
  flex: 1;
  padding: 4px 18px 52px 19px;
}

label {
  display: block;
  line-height: 26px;
}

textarea,
input {
  display: block;
  width: 100%;
  padding: 7px 6px;
  border: 1px solid #d8d8d8;
  outline: 0;
  background: transparent;
  color: #555;
}

textarea {
  font: 16px/21px 'DejaVu Sans Mono', 'Noto Sans CJK SC', monospace;
}

#rules {
  height: 250px;
  margin: 1px 0 24px;
}

#problems {
  height: 44px;
  margin-top: 2px;
  font: 16px 'Liberation Sans', sans-serif;
}

.help {
  margin: 6px 0 19px;
  color: #888;
  font-size: 16px;
  line-height: 26px;
}

.editor {
  position: relative;
  height: 250px;
  border: 1px solid #d8d8d8;
}

.editor-tools {
  display: flex;
  align-items: center;
  height: 51px;
  padding-left: 6px;
  background: #eef4f5;
}

.editor-tools button {
  width: 38px;
  height: 32px;
}

.editor-tools svg {
  display: block;
  width: 18px;
  height: 18px;
  margin: auto;
  fill: #7b8f9c;
}

.editor-tools span {
  width: 1px;
  height: 32px;
  margin: 0 7px 0 7px;
  background: #d0d6d8;
}

#content {
  height: 196px;
  padding: 10px 5px;
  border: 0;
  resize: none;
}

.caret {
  position: absolute;
  left: 14px;
  top: 56px;
  width: 1px;
  height: 31px;
  background: #000;
}

.click-ring {
  position: absolute;
  left: -18px;
  top: 46px;
  width: 46px;
  height: 46px;
  border: 3px solid rgba(240, 110, 120, 0.4);
  border-radius: 50%;
}

.pointer {
  position: absolute;
  left: 226px;
  top: 69px;
  width: 59px;
  height: 59px;
  padding: 29px 0 0 29px;
  border-radius: 50%;
  background: #ff0;
}

.actions {
  display: flex;
  gap: 5px;
  margin-top: 20px;
}

.actions button {
  width: 100px;
  height: 44px;
  border: 1px solid #d5d5d5;
  border-radius: 22px;
  background: #ebebeb;
  font-size: 18px;
}

.actions .primary {
  border-color: #5c9cd6;
  background: #5c9cd6;
  color: #fff;
}

.hints {
  width: 337px;
  padding: 0 18px 31px;
}

h4 {
  margin: 0 0 8px;
  color: #888;
  font-size: 18px;
  font-weight: 400;
  line-height: 14px;
}

pre {
  margin: 0 0 22px;
  padding: 6px 7px;
  background: #f5f5f5;
  font: 16px/18px 'DejaVu Sans Mono', 'Noto Sans CJK SC', monospace;
}

h2 {
  margin: 36px 0 11px;
  color: #333;
  font-size: 24px;
  font-weight: 400;
  line-height: 36px;
}

ul {
  margin: 0;
  padding-left: 24px;
  line-height: 26px;
}

li a {
  color: #6593bd;
}

/* floating windows */

.speaking {
  position: absolute;
  right: 0;
  top: 85px;
  z-index: 2;
  display: flex;
  align-items: center;
  width: 254px;
  height: 45px;
  padding: 0 6px 0 14px;
  border-radius: 6px 0 0 6px;
  background: #373c40;
  color: #fff;
}

.speaking span {
  margin-left: 14px;
  padding-left: 9px;
  border-left: 1px solid #262a2d;
  line-height: 41px;
}

.brand {
  margin-left: auto;
}

.say {
  position: absolute;
  left: 0;
  bottom: 115px;
  display: flex;
  justify-content: flex-end;
  align-items: center;
  gap: 10px;
  width: 93px;
  height: 38px;
  padding-right: 17px;
  border-radius: 0 4px 4px 0;
  background: rgba(85, 87, 89, 0.75);
  color: #c4c4c4;
  line-height: 26px;
  white-space: nowrap;
}

.say span {
  padding-right: 11px;
  border-right: 1px solid #999;
}

.translate {
  position: absolute;
  right: -28px;
  bottom: 57px;
  height: 48px;
  border-radius: 50%;
  background: #f5f6f7;
}

/* taskbar */

.taskbar {
  position: relative;
  display: flex;
  flex: none;
  justify-content: center;
  height: 60px;
  overflow: hidden;
  background: #142a37;
  color: #fff;
}

.apps {
  display: flex;
  gap: 5px;
  padding-top: 5px;
}

.apps button {
  position: relative;
  width: 50px;
  height: 50px;
  border-radius: 5px;
}

.apps svg {
  display: block;
  width: 30px;
  height: 30px;
  margin: auto;
}

.apps b {
  position: absolute;
  left: 0;
  right: 0;
  bottom: 10px;
  font-size: 12px;
  line-height: 14px;
}

.apps .open {
  background: #243943;
}

.open::after,
.running::after {
  content: '';
  position: absolute;
  left: 21px;
  bottom: 0;
  width: 8px;
  height: 4px;
  border-radius: 2px;
  background: #8d9ba3;
}

.open::after {
  left: 15px;
  width: 20px;
  background: #57b6ec;
}

.tray {
  position: absolute;
  left: calc(100% - 444px);
  display: flex;
  align-items: center;
  gap: 10px;
  height: 60px;
  white-space: nowrap;
}

.tray svg {
  width: 20px;
  height: 20px;
}

.tray .wide {
  margin-left: 5px;
}

.ime {
  margin: 0 7px 0 10px;
  font-size: 18px;
}

time {
  margin: 20px 0 0 10px;
  font-family: 'Noto Sans CJK SC', sans-serif;
  font-size: 16px;
  line-height: 20px;
}

.corner {
  position: fixed;
  width: 24px;
  height: 6px;
  background: #05d47f;
}

.top {
  top: 0;
}

.bottom {
  bottom: 0;
}

.left {
  left: 0;
}

.right {
  right: 0;
}
```
